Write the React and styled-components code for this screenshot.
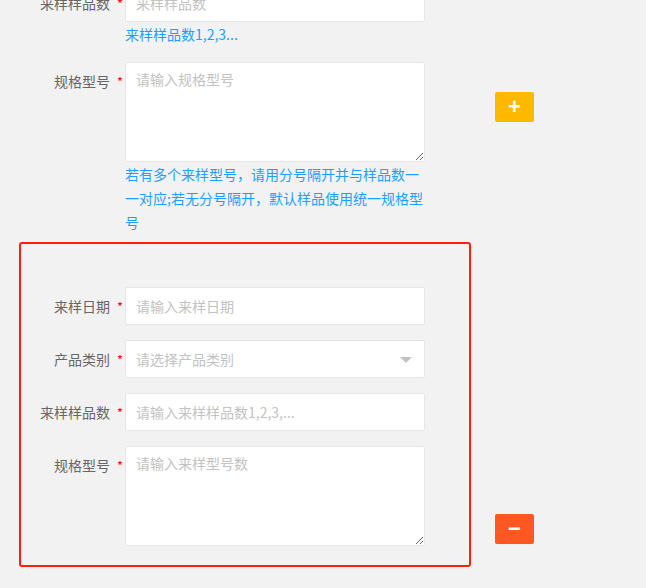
import React from 'react';
import styled, { createGlobalStyle } from 'styled-components';

const Global = createGlobalStyle`
  html, body { margin: 0; background: #f2f2f2; }
  body { font-family: "Noto Sans CJK SC", "Noto Sans", sans-serif; font-size: 14px; color: #666; overflow: hidden; }
  * { box-sizing: border-box; }
`;

const Page = styled.div`
  padding-left: 19px;
  margin-top: -18px;
  display: flex;
  flex-direction: column;
  gap: 6px;
`;

const Group = styled.div`
  display: flex;
  align-items: flex-start;
`;

const Box = styled.div`
  width: 452px;
  border: 2px solid ${p => p.$border};
  border-radius: 3px;
  padding: ${p => p.$pad};
  display: flex;
  flex-direction: column;
  gap: 15px;
`;

const Item = styled.div`
  display: flex;
  align-items: flex-start;
`;

const Label = styled.label`
  width: 104px;
  height: 38px;
  display: flex;
  align-items: center;
  justify-content: flex-end;
  color: #666;
  flex-shrink: 0;
`;

const Star = styled.span`
  color: #ff0000;
  margin-left: 7px;
  width: 8px;
  font-size: 13px;
`;

const Field = styled.div`
  width: 300px;
  display: flex;
  flex-direction: column;
`;

const Input = styled.input`
  width: 300px;
  height: 38px;
  border: 1px solid #e6e6e6;
  border-radius: 2px;
  background: #fff;
  padding: 0 10px;
  font: inherit;
  outline: none;
  &::placeholder { color: #c2c2c2; }
`;

const Textarea = styled.textarea`
  width: 300px;
  height: 100px;
  border: 1px solid #e6e6e6;
  border-radius: 2px;
  background: #fff;
  padding: 6px 10px;
  font: inherit;
  line-height: 20px;
  outline: none;
  display: block;
  &::placeholder { color: #c2c2c2; }
`;

const SelectBox = styled.div`
  position: relative;
  width: 300px;
  height: 38px;
  border: 1px solid #e6e6e6;
  border-radius: 2px;
  background: #fff;
  padding: 0 10px;
  display: flex;
  align-items: center;
  color: #c2c2c2;
`;

const Arrow = styled.span`
  position: absolute;
  right: 12px;
  top: 16px;
  border: 6px solid transparent;
  border-top-color: #c2c2c2;
  border-bottom: none;
`;

const Hint = styled.div`
  color: #1e9fff;
  line-height: 24px;
`;

const Side = styled.button`
  margin-left: 24px;
  margin-top: ${p => p.$mt}px;
  width: 39px;
  height: 30px;
  border: none;
  border-radius: 2px;
  background: ${p => p.$bg};
  color: #fff;
  font-size: 22px;
  font-weight: bold;
  line-height: 30px;
  padding: 0;
  display: flex;
  align-items: center;
  justify-content: center;
`;

export default function App() {
  return (
    <>
      <Global />
      <Page>
        <Group>
          <Box $border="transparent" $pad="0">
            <Item style={{ marginBottom: 1 }}>
              <Label>来样样品数<Star>*</Star></Label>
              <Field>
                <Input placeholder="来样样品数" />
                <Hint>来样样品数1,2,3...</Hint>
              </Field>
            </Item>
            <Item>
              <Label>规格型号<Star>*</Star></Label>
              <Field>
                <Textarea placeholder="请输入规格型号" />
                <Hint>若有多个来样型号，请用分号隔开并与样品数一一对应;若无分号隔开，默认样品使用统一规格型号</Hint>
              </Field>
            </Item>
          </Box>
          <Side $bg="#ffb800" $mt={110}>+</Side>
        </Group>
        <Group>
          <Box $border="#ff1e12" $pad="43px 0 19px 0">
            <Item>
              <Label>来样日期<Star>*</Star></Label>
              <Input placeholder="请输入来样日期" />
            </Item>
            <Item>
              <Label>产品类别<Star>*</Star></Label>
              <SelectBox>请选择产品类别<Arrow /></SelectBox>
            </Item>
            <Item>
              <Label>来样样品数<Star>*</Star></Label>
              <Input placeholder="请输入来样样品数1,2,3,..." />
            </Item>
            <Item>
              <Label>规格型号<Star>*</Star></Label>
              <Textarea placeholder="请输入来样型号数" />
            </Item>
          </Box>
          <Side $bg="#ff5722" $mt={272}>−</Side>
        </Group>
      </Page>
    </>
  );
}
